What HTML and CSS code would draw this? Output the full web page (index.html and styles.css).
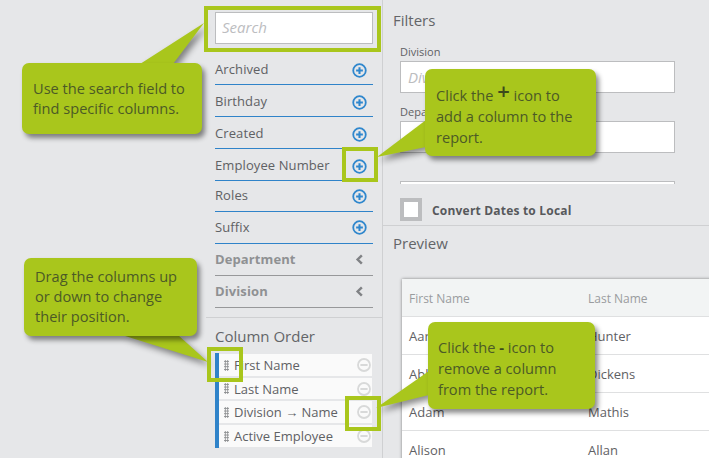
FILE: index.html
```html
<!DOCTYPE html>
<html lang="en">
<head>
<meta charset="utf-8">
<title>Report columns</title>
<link rel="stylesheet" href="styles.css">
</head>
<body>
<div class="app">
  <div class="gutter"></div>
  <aside class="sidebar">
    <section class="available">
      <input class="search" type="text" placeholder="Search">
      <ul class="rows">
        <li class="row">Archived<svg class="ic"><use href="#plus"/></svg></li>
        <li class="row">Birthday<svg class="ic"><use href="#plus"/></svg></li>
        <li class="row">Created<svg class="ic"><use href="#plus"/></svg></li>
        <li class="row">Employee Number<svg class="ic"><use href="#plus"/></svg></li>
        <li class="row row-short">Roles<svg class="ic"><use href="#plus"/></svg></li>
        <li class="row row-raised">Suffix<svg class="ic"><use href="#plus"/></svg></li>
        <li class="row group">Department<svg class="ic"><use href="#chev"/></svg></li>
        <li class="row group">Division<svg class="ic"><use href="#chev"/></svg></li>
      </ul>
    </section>
    <section class="order">
      <h2 class="heading">Column Order</h2>
      <ul class="order-list">
        <li class="order-item"><span class="grip"></span><span class="order-name">First Name</span><svg class="ic-m"><use href="#minus"/></svg></li>
        <li class="order-item"><span class="grip"></span><span class="order-name">Last Name</span><svg class="ic-m"><use href="#minus"/></svg></li>
        <li class="order-item"><span class="grip"></span><span class="order-name">Division → Name</span><svg class="ic-m"><use href="#minus"/></svg></li>
        <li class="order-item"><span class="grip"></span><span class="order-name">Active Employee</span><svg class="ic-m"><use href="#minus"/></svg></li>
      </ul>
    </section>
  </aside>
  <main class="main">
    <section class="filters">
      <h2 class="heading">Filters</h2>
      <div class="filter-scroll">
        <div class="field"><label class="field-label">Division</label><input class="field-input" type="text" placeholder="Division"></div>
        <div class="field"><label class="field-label">Department</label><input class="field-input" type="text"></div>
        <div class="field"><label class="field-label"></label><input class="field-input" type="text"></div>
      </div>
      <div class="check-row"><span class="check"></span><span class="check-label">Convert Dates to Local</span></div>
    </section>
    <section class="preview">
      <h2 class="heading">Preview</h2>
      <div class="table">
        <div class="tr th"><span>First Name</span><span>Last Name</span></div>
        <div class="tr"><span>Aaron</span><span>Hunter</span></div>
        <div class="tr"><span>Abby</span><span>Dickens</span></div>
        <div class="tr"><span>Adam</span><span>Mathis</span></div>
        <div class="tr"><span>Alison</span><span>Allan</span></div>
      </div>
    </section>
  </main>
</div>

<svg class="tails" viewBox="0 0 709 458">
  <g class="tail-shapes">
    <polygon points="204,23 140,64 173,64"/>
    <polygon points="208,362 122,335 178,335"/>
    <polygon points="377,157 426,120 426,147"/>
    <polygon points="376,408 429,371 429,395"/>
  </g>
</svg>
<div class="mark mark-search"></div>
<div class="mark mark-plus"></div>
<div class="mark mark-grip"></div>
<div class="mark mark-minus"></div>
<div class="callout callout-search">Use the search field to<br>find specific columns.</div>
<div class="callout callout-drag">Drag the columns up<br>or down to change<br>their position.</div>
<div class="callout callout-add">Click the <b class="sym-plus">+</b> icon to<br>add a column to the<br>report.</div>
<div class="callout callout-remove">Click the <b class="sym-minus">-</b> icon to<br>remove a column<br>from the report.</div>

<svg class="defs" width="0" height="0">
  <symbol id="plus" viewBox="0 0 16 16">
    <circle cx="8" cy="8" r="6.7" fill="none" stroke="currentColor" stroke-width="1.9"/>
    <path d="M8 4.4v7.2M4.4 8h7.2" stroke="currentColor" stroke-width="2.2" fill="none"/>
  </symbol>
  <symbol id="minus" viewBox="0 0 14 14">
    <circle cx="7" cy="7" r="6" fill="none" stroke="currentColor" stroke-width="1.8"/>
    <path d="M3.4 7h7.2" stroke="currentColor" stroke-width="2" fill="none"/>
  </symbol>
  <symbol id="chev" viewBox="0 0 16 16">
    <path d="M10.5 3.5 6 8l4.5 4.5" stroke="currentColor" stroke-width="2.6" fill="none"/>
  </symbol>
</svg>
</body>
</html>
```
FILE: styles.css
```css
* { box-sizing: border-box; }
html, body {
  margin: 0;
  width: 709px;
  height: 458px;
  overflow: hidden;
  background: #e6e7e9;
  font-family: "Open Sans", "Liberation Sans", sans-serif;
  color: #5f6164;
  font-size: 13px;
}
ul { list-style: none; margin: 0; padding: 0; }
.app { display: flex; height: 458px; }
.gutter { width: 206px; flex: none; }
.sidebar { width: 177px; flex: none; border-right: 1px solid #cfd0d2; }
.available { padding: 12px 9px 9px; border-bottom: 1px solid #cfd0d2; }
.search {
  display: block;
  width: 100%;
  height: 32px;
  border: 1px solid #bcbdbf;
  background: #fff;
  padding: 0 6px 2px;
  font: italic 15px "Open Sans", sans-serif;
  margin-bottom: 9px;
  outline: none;
}
.search::placeholder, .field-input::placeholder { color: #bcbdbf; opacity: 1; }
.row {
  height: 32px;
  display: flex;
  align-items: center;
  justify-content: space-between;
  border-bottom: 1px solid #2f83c9;
  padding: 0 6px 0 0;
  font-size: 13px;
  letter-spacing: .1px;
}
.ic { width: 15px; height: 15px; color: #2f87cd; flex: none; margin-top: 3px; }
.row-short { height: 31px; padding-bottom: 2px; }
.row-short .ic { margin-top: 3px; }
.row-raised { padding-bottom: 2px; }
.row-raised .ic { margin-top: 2px; }
.group { font-weight: 700; color: #8f9193; border-bottom-color: #97989a; padding-bottom: 1px; }
.group .ic { color: #808285; margin-top: 0; }
.heading { margin: 0; font-weight: 400; font-size: 15px; line-height: 22px; color: #636568; }
.order { padding: 7px 9px 0; }
.order .heading { margin-bottom: 6px; }
.order-list {
  border-left: 4px solid #2f83c9;
  display: flex;
  flex-direction: column;
  gap: 2px;
  padding: 1px 0;
  width: 157px;
}
.order-item {
  height: 22px;
  background: #fafafa;
  display: flex;
  align-items: center;
  padding: 0 1px 0 5px;
}
.order-item:nth-child(2) { height: 21px; }
.grip {
  width: 5px;
  height: 11px;
  margin-right: 5px;
  flex: none;
  background-image: radial-gradient(circle, #8c8e90 0.9px, transparent 1px);
  background-size: 2.5px 2.7px;
}
.order-name { flex: 1; white-space: nowrap; }
.ic-m { width: 14px; height: 14px; color: #d8d9d9; flex: none; }
.main { flex: 1; min-width: 0; overflow: hidden; }
.filters { height: 226px; border-bottom: 1px solid #cfd0d2; padding-top: 9px; }
.filters .heading, .preview .heading { padding-left: 10px; }
.filter-scroll { margin: 12px 0 0 17px; width: 275px; height: 141px; overflow: hidden; }
.field { margin-bottom: 10px; }
.field-label { display: block; height: 18px; line-height: 18px; font-size: 11px; }
.field-input {
  display: block;
  width: 100%;
  height: 32px;
  border: 1px solid #bcbdbf;
  background: #fff;
  padding: 0 7px;
  font: italic 15px "Open Sans", sans-serif;
}
.check-row { display: flex; align-items: center; margin: 14px 0 0 17px; gap: 10px; }
.check { width: 22px; height: 23px; border: 4px solid #bcbdbf; background: #fff; flex: none; }
.check-label { font-weight: 700; font-size: 12px; color: #57595c; letter-spacing: .2px; padding-top: 2px; }
.preview { padding-top: 6px; }
.table {
  margin: 25px 0 0 19px;
  width: 340px;
  background: #fff;
  box-shadow: 0 0 3px rgba(0, 0, 0, .45);
}
.tr {
  display: grid;
  grid-template-columns: 179px 1fr;
  align-items: center;
  height: 38px;
  padding-left: 7px;
  border-bottom: 1px solid #dfe0e1;
}
.th { background: #f2f4f4; font-size: 12px; color: #9a9c9e; padding-top: 2px; }
.tails { position: absolute; left: 0; top: 0; width: 709px; height: 458px; }
.tail-shapes { fill: #a9c61c; filter: drop-shadow(3px 4px 3px rgba(0, 0, 0, .45)); }
.mark { position: absolute; border: 4px solid #a9c61c; }
.mark-search { left: 204px; top: 6px; width: 177px; height: 46px; }
.mark-plus { left: 342px; top: 147px; width: 36px; height: 35px; }
.mark-grip { left: 207px; top: 347px; width: 36px; height: 35px; }
.mark-minus { left: 345px; top: 396px; width: 36px; height: 35px; }
.callout {
  position: absolute;
  background: #a9c61c;
  border-radius: 7px;
  box-shadow: 3px 4px 5px rgba(0, 0, 0, .45);
  color: #4c5a26;
  font-size: 14.6px;
  line-height: 20px;
  white-space: nowrap;
}
.callout-search { left: 22px; top: 63px; width: 180px; height: 71px; padding: 15px 0 0 11px; }
.callout-drag { left: 24px; top: 258px; width: 173px; height: 78px; padding: 8px 0 0 11px; }
.callout-add { left: 425px; top: 69px; width: 171px; height: 87px; padding: 16px 0 0 11px; line-height: 21px; }
.callout-remove { left: 428px; top: 322px; width: 167px; height: 87px; padding: 15px 0 0 10px; line-height: 21px; }
.sym-plus { font-size: 22px; line-height: 14px; font-weight: 600; color: #3d4a1c; position: relative; top: -2px; }
.sym-minus { font-size: 15px; line-height: 14px; color: #3d4a1c; }
.defs { position: absolute; }
```
